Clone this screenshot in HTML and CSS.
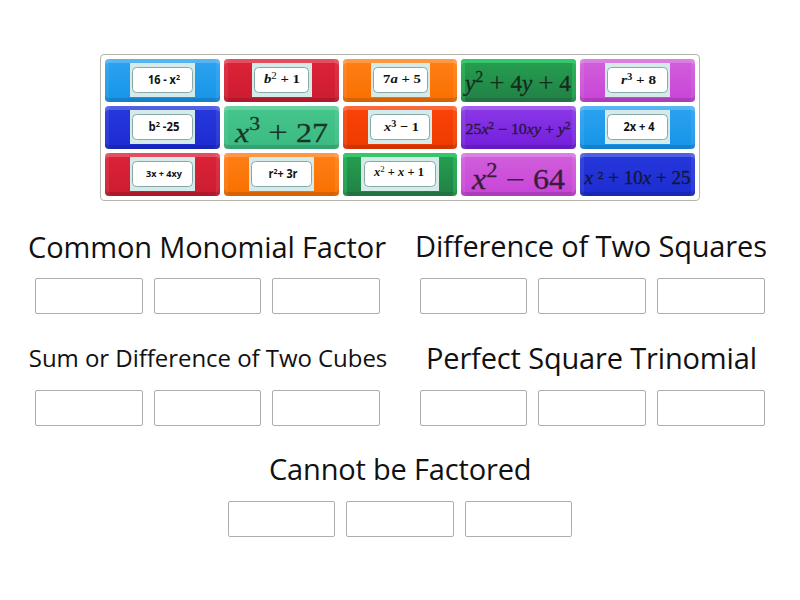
FILE: index.html
```html
<!DOCTYPE html>
<html lang="en">
<head>
<meta charset="utf-8">
<title>Factoring group sort</title>
<link rel="stylesheet" href="styles.css">
</head>
<body>
<main class="board">
<section class="tray">
<div class="tile sky"><svg viewBox="0 0 115 43"><rect class="mat" x="25" y="4" width="65" height="34"/><rect class="card" x="27.5" y="8.5" width="60" height="25" rx="4"/><text class="sans" x="43" y="24.7" font-size="11.5" textLength="32" lengthAdjust="spacingAndGlyphs">16 - x<tspan font-size="7.5" dy="-4">2</tspan></text></svg></div>
<div class="tile red"><svg viewBox="0 0 115 43"><rect class="mat" x="28" y="4" width="60" height="34"/><rect class="card" x="30.5" y="8.5" width="54" height="25" rx="4"/><text class="serif" x="40" y="23.5" font-size="13.5" textLength="36" lengthAdjust="spacingAndGlyphs"><tspan class="it">b</tspan><tspan class="thin" font-size="10" dy="-4">2</tspan><tspan dy="4"> + 1</tspan></text></svg></div>
<div class="tile orange"><svg viewBox="0 0 115 43"><rect class="mat" x="28" y="4" width="59" height="34"/><rect class="card" x="30.5" y="8.5" width="54" height="25" rx="4"/><text class="serif" x="40" y="23.5" font-size="13.5" textLength="38" lengthAdjust="spacingAndGlyphs">7<tspan class="it">a</tspan> + 5</text></svg></div>
<div class="tile green"><svg viewBox="0 0 115 43"><text class="math" x="4" y="32" font-size="23" textLength="106" lengthAdjust="spacingAndGlyphs"><tspan class="it">y</tspan><tspan font-size="16" dy="-9">2</tspan><tspan dy="9"> </tspan><tspan class="op" font-size="27" dy="1">+</tspan><tspan dy="-1"> 4</tspan><tspan class="it">y</tspan> <tspan class="op" font-size="27" dy="1">+</tspan><tspan dy="-1"> 4</tspan></text></svg></div>
<div class="tile pink"><svg viewBox="0 0 115 43"><rect class="mat" x="25" y="4" width="65" height="34"/><rect class="card" x="27.5" y="8.5" width="60" height="25" rx="4"/><text class="serif" x="41" y="25" font-size="13.5" textLength="35" lengthAdjust="spacingAndGlyphs"><tspan class="it">r</tspan><tspan font-size="9.5" dy="-4">3</tspan><tspan dy="4"> + 8</tspan></text></svg></div>

<div class="tile blue"><svg viewBox="0 0 115 43"><rect class="mat" x="25" y="4" width="65" height="34"/><rect class="card" x="27.5" y="8.5" width="60" height="25" rx="4"/><text class="sans" x="43.5" y="24.7" font-size="11.5" textLength="31" lengthAdjust="spacingAndGlyphs">b<tspan font-size="7.5" dy="-4">2</tspan><tspan dy="4"> -25</tspan></text></svg></div>
<div class="tile mint"><svg viewBox="0 0 115 43"><text class="math" x="11" y="35.7" font-size="28" textLength="93" lengthAdjust="spacingAndGlyphs"><tspan class="it">x</tspan><tspan font-size="19" dy="-12">3</tspan><tspan dy="12"> </tspan><tspan class="op" font-size="31" dy="1">+</tspan><tspan dy="-1"> 27</tspan></text></svg></div>
<div class="tile flame"><svg viewBox="0 0 115 43"><rect class="mat" x="25" y="4" width="64" height="34"/><rect class="card" x="27.5" y="8.5" width="59" height="25" rx="4"/><text class="serif" x="41" y="24.7" font-size="13.5" textLength="35" lengthAdjust="spacingAndGlyphs"><tspan class="it">x</tspan><tspan font-size="9.5" dy="-4">3</tspan><tspan dy="4"> − 1</tspan></text></svg></div>
<div class="tile purple"><svg viewBox="0 0 115 43"><text class="math" x="4.5" y="27.5" font-size="14.5" textLength="105" lengthAdjust="spacingAndGlyphs">25<tspan class="it">x</tspan><tspan font-size="10" dy="-5">2</tspan><tspan dy="5"> − 10</tspan><tspan class="it">xy</tspan> + <tspan class="it">y</tspan><tspan font-size="10" dy="-5">2</tspan></text></svg></div>
<div class="tile sky"><svg viewBox="0 0 115 43"><rect class="mat" x="25" y="4" width="65" height="34"/><rect class="card" x="27.5" y="8.5" width="60" height="25" rx="4"/><text class="sans" x="43.5" y="24.7" font-size="11.5" textLength="31" lengthAdjust="spacingAndGlyphs">2x + 4</text></svg></div>

<div class="tile red"><svg viewBox="0 0 115 43"><rect class="mat" x="25" y="4" width="65" height="34"/><rect class="card" x="27.5" y="8.5" width="60" height="25" rx="4"/><text class="sans" x="41" y="24.3" font-size="9.5" textLength="36" lengthAdjust="spacingAndGlyphs">3x + 4xy</text></svg></div>
<div class="tile orange"><svg viewBox="0 0 115 43"><rect class="mat" x="25" y="4" width="65" height="34"/><rect class="card" x="27.5" y="8.5" width="60" height="25" rx="4"/><text class="sans" x="44.5" y="25" font-size="11.5" textLength="29" lengthAdjust="spacingAndGlyphs">r<tspan font-size="7.5" dy="-4">2</tspan><tspan dy="4">+ 3r</tspan></text></svg></div>
<div class="tile green"><svg viewBox="0 0 115 43"><rect class="mat" x="18" y="4" width="78" height="34"/><rect class="card" x="21.5" y="8.5" width="71" height="25" rx="4"/><text class="serif" x="31" y="23" font-size="11.5" textLength="50" lengthAdjust="spacingAndGlyphs"><tspan class="it">x</tspan><tspan class="thin" font-size="8" dy="-4">2</tspan><tspan dy="4"> + </tspan><tspan class="it">x</tspan> + 1</text></svg></div>
<div class="tile pink"><svg viewBox="0 0 115 43"><text class="math" x="11" y="36" font-size="28.5" textLength="93" lengthAdjust="spacingAndGlyphs"><tspan class="it">x</tspan><tspan font-size="20" dy="-12">2</tspan><tspan dy="12"> </tspan><tspan class="op" font-size="31" dy="1">−</tspan><tspan dy="-1"> 64</tspan></text></svg></div>
<div class="tile blue"><svg viewBox="0 0 115 43"><text class="math" x="4.5" y="30.5" font-size="18" textLength="106" lengthAdjust="spacingAndGlyphs"><tspan class="it">x</tspan> <tspan font-size="11" dy="-5">2</tspan><tspan dy="5"> + 10</tspan><tspan class="it">x</tspan> + 25</text></svg></div>
</section>

<section class="groups">
<div class="group"><h2><svg viewBox="0 0 370 48"><text x="13" y="33.5" font-size="29" textLength="358">Common Monomial Factor</text></svg></h2><div class="slots"><i></i><i></i><i></i></div></div>
<div class="group"><h2><svg viewBox="0 0 370 48"><text x="15" y="33" font-size="29" textLength="352">Difference of Two Squares</text></svg></h2><div class="slots"><i></i><i></i><i></i></div></div>
<div class="group"><h2><svg viewBox="0 0 370 48"><text x="13.8" y="31" font-size="24" textLength="358.5">Sum or Difference of Two Cubes</text></svg></h2><div class="slots"><i></i><i></i><i></i></div></div>
<div class="group"><h2><svg viewBox="0 0 370 48"><text x="26" y="32.5" font-size="29" textLength="331">Perfect Square Trinomial</text></svg></h2><div class="slots"><i></i><i></i><i></i></div></div>
<div class="group last"><h2><svg viewBox="0 0 370 48"><text x="61" y="33" font-size="29" textLength="262.5">Cannot be Factored</text></svg></h2><div class="slots"><i></i><i></i><i></i></div></div>
</section>
</main>
</body>
</html>
```
FILE: styles.css
```css
* { box-sizing: border-box; }
body { margin: 0; background: #fff; }
.board { width: 800px; height: 600px; padding-top: 54px; overflow: hidden; }
.tray {
  width: 600px; height: 147px; margin: 0 auto; padding: 4px;
  border: 1px solid #b5b5ad; border-radius: 4px;
  display: grid; grid-template-columns: repeat(5, minmax(0, 1fr)); grid-auto-rows: 43px; gap: 4px;
}
.tile {
  border-radius: 4px;
  background: linear-gradient(var(--a), var(--b));
  box-shadow: inset 0 4px rgba(255,255,255,.2), inset 0 -4px rgba(0,0,0,.13), inset 4px 0 rgba(255,255,255,.07), inset -4px 0 rgba(255,255,255,.07);
}
.tile svg { display: block; width: 115px; height: 43px; overflow: visible; }
.sky { --a: #2da3ef; --b: #1694e8; }
.red { --a: #dd2338; --b: #cb1c30; }
.orange { --a: #ff7f16; --b: #f87000; }
.green { --a: #25a050; --b: #228046; box-shadow: inset 0 4px #36c76d, inset 0 -4px rgba(0,0,0,.1), inset 4px 0 rgba(50,200,105,.45), inset -4px 0 rgba(50,200,105,.45); }
.pink { --a: #d260dc; --b: #c744d6; }
.blue { --a: #2638dc; --b: #1c2cd0; }
.mint { --a: #45c68c; --b: #3bb981; }
.flame { --a: #fa4308; --b: #ed3b00; }
.purple { --a: #8c38e8; --b: #721edb; }
.mat { fill: #d5ebe9; }
.card { fill: #fff; stroke: #88a9aa; }
.tile text { fill: #111; white-space: pre; }
.sans { font-family: "Open Sans", sans-serif; font-weight: 700; }
.serif { font-family: "Liberation Serif", serif; font-weight: 700; }
.math { font-family: "Liberation Serif", serif; opacity: .8; stroke: #111; stroke-width: .3px; }
.op { stroke: none; }
.it { font-style: italic; }
.thin { font-weight: 400; }
.groups { display: grid; grid-template-columns: 370px 370px; column-gap: 14.8px; padding: 23px 0 0 15px; row-gap: 21.7px; }
.group { height: 90px; display: grid; grid-template-rows: 54px 36px; }
h2 { margin: 0; height: 48px; }
h2 svg { display: block; width: 370px; height: 48px; overflow: visible; }
h2 text { font-family: "Open Sans", "Noto Sans", sans-serif; font-weight: 400; fill: #111; }
.slots { display: grid; grid-template-columns: repeat(3, 107.7px); column-gap: 10.9px; padding-left: 20px; }
.slots i { height: 36px; border: 1px solid #adadad; border-radius: 2px; }
.last { grid-column: 1 / -1; justify-self: start; margin-left: 192.6px; }
```
